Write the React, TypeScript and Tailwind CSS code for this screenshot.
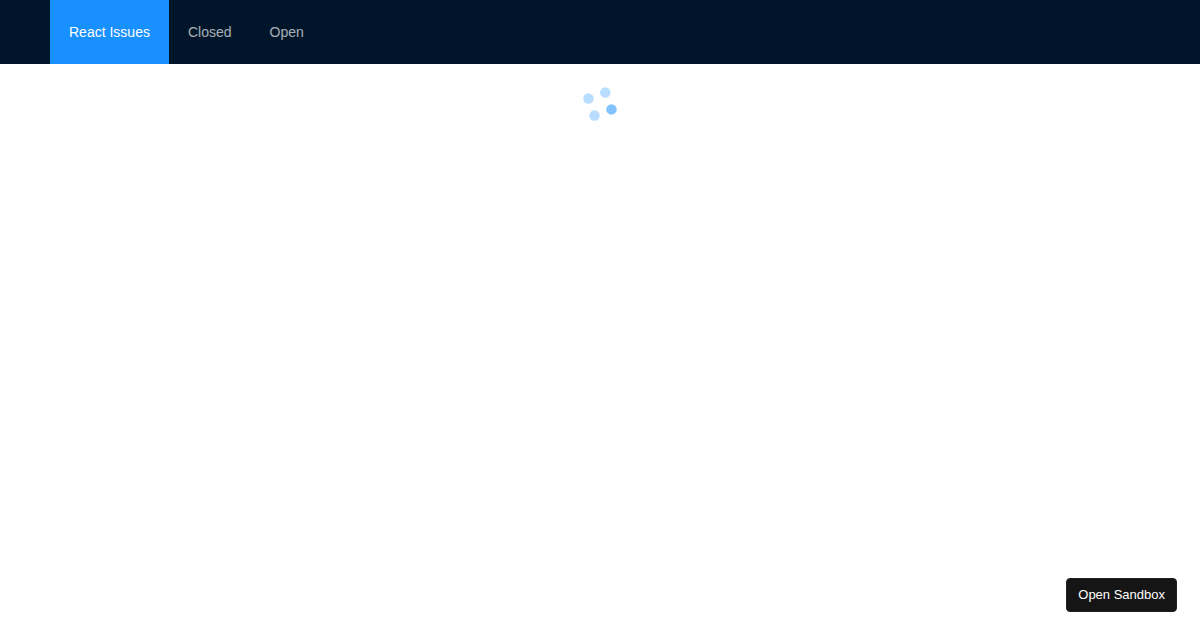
const navItems = [
  { label: 'React Issues', href: '#/', active: true },
  { label: 'Closed', href: '#/closed', active: false },
  { label: 'Open', href: '#/open', active: false },
];

function Header() {
  return (
    <header className="bg-[#001529] px-[50px]">
      <nav className="flex h-16 text-sm leading-[64px]">
        {navItems.map((item) => (
          <a
            key={item.label}
            href={item.href}
            aria-current={item.active ? 'page' : undefined}
            className={`px-[19px] ${item.active ? 'bg-[#1890ff] text-white' : 'text-white/65 hover:text-white'}`}
          >
            {item.label}
          </a>
        ))}
      </nav>
    </header>
  );
}

function Spinner() {
  return (
    <svg role="status" aria-label="Loading" className="size-10" viewBox="0 0 40 40" fill="#1890ff">
      <circle cx="8.5" cy="14.5" r="5.25" opacity="0.3" />
      <circle cx="25.3" cy="8.5" r="5.25" opacity="0.3" />
      <circle cx="31.5" cy="25.4" r="5.25" opacity="0.54" />
      <circle cx="14.5" cy="31.5" r="5.25" opacity="0.3" />
    </svg>
  );
}

export default function App() {
  return (
    <div className="min-h-screen bg-white font-['Liberation_Sans',Arial,sans-serif]">
      <Header />
      <main className="flex justify-center pt-5">
        <Spinner />
      </main>
      <button
        type="button"
        className="fixed right-[23px] bottom-[18px] h-[34px] rounded border border-[#202020] bg-[#151515] px-[11px] text-[13px] text-white"
      >
        Open Sandbox
      </button>
    </div>
  );
}
